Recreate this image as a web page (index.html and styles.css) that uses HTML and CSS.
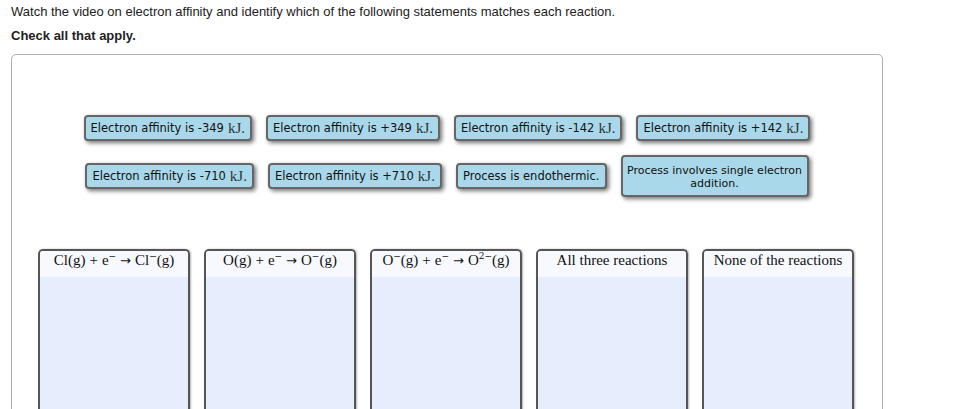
FILE: index.html
```html
<!DOCTYPE html>
<html>
<head>
<meta charset="utf-8">
<link rel="stylesheet" href="styles.css">
</head>
<body>
<p class="prompt">Watch the video on electron affinity and identify which of the following statements matches each reaction.</p>
<p class="instr">Check all that apply.</p>
<div class="box">
  <div class="chips">
    <div class="row">
      <div class="chip">Electron affinity is -349 <span class="unit">kJ.</span></div>
      <div class="chip">Electron affinity is +349 <span class="unit">kJ.</span></div>
      <div class="chip">Electron affinity is -142 <span class="unit">kJ.</span></div>
      <div class="chip">Electron affinity is +142 <span class="unit">kJ.</span></div>
    </div>
    <div class="row">
      <div class="chip">Electron affinity is -710 <span class="unit">kJ.</span></div>
      <div class="chip">Electron affinity is +710 <span class="unit">kJ.</span></div>
      <div class="chip">Process is endothermic.</div>
      <div class="chip wide">Process involves single electron addition.</div>
    </div>
  </div>
  <div class="bins">
    <div class="bin"><div class="bin-head">Cl(g)<span class="op">+</span>e<sup>−</sup><span class="arr">→</span>Cl<sup>−</sup>(g)</div><div class="bin-body"></div></div>
    <div class="bin"><div class="bin-head">O(g)<span class="op">+</span>e<sup>−</sup><span class="arr">→</span>O<sup>−</sup>(g)</div><div class="bin-body"></div></div>
    <div class="bin"><div class="bin-head">O<sup>−</sup>(g)<span class="op">+</span>e<sup>−</sup><span class="arr">→</span>O<sup>2−</sup>(g)</div><div class="bin-body"></div></div>
    <div class="bin"><div class="bin-head">All three reactions</div><div class="bin-body"></div></div>
    <div class="bin"><div class="bin-head">None of the reactions</div><div class="bin-body"></div></div>
  </div>
</div>
</body>
</html>
```
FILE: styles.css
```css
html, body {
  margin: 0;
  padding: 0;
  background: #fff;
}
body {
  padding: 0 11px;
  font-family: "Liberation Sans", Arial, sans-serif;
  font-size: 13px;
  color: #222;
  overflow: hidden;
}
.prompt {
  margin: 4px 0 0;
  line-height: 16px;
}
.instr {
  margin: 8px 0 0;
  line-height: 16px;
  font-weight: bold;
}
.box {
  margin-top: 10px;
  width: 872px;
  box-sizing: border-box;
  border: 1px solid #b0b0b0;
  border-radius: 5px;
  padding-top: 60px;
  height: 420px;
}
.chips {
  display: flex;
  flex-direction: column;
  gap: 14px;
}
.row {
  display: flex;
  justify-content: center;
  align-items: center;
  gap: 14px;
}
.chip {
  box-sizing: border-box;
  height: 26px;
  display: flex;
  align-items: center;
  justify-content: center;
  padding: 0 5px;
  background: #a8d8ea;
  border: 2px solid #666;
  border-radius: 4px;
  box-shadow: 2px 2px 4px rgba(0, 0, 0, 0.55);
  font-family: "DejaVu Sans", Verdana, sans-serif;
  font-size: 11.5px;
  color: #111;
  white-space: nowrap;
}
.chip .unit {
  font-family: "Liberation Serif", "Times New Roman", serif;
  font-size: 15px;
  margin-left: 4px;
  color: #333;
}
.chip.wide {
  height: 42px;
  width: 188px;
  padding: 2px 2px 0;
  font-size: 11px;
  white-space: normal;
  text-align: center;
  line-height: 13px;
}
.bins {
  margin-top: 52px;
  display: flex;
  justify-content: center;
  gap: 14px;
  padding-right: 2px;
}
.bin {
  width: 152px;
  box-sizing: border-box;
  border: 2px solid #555;
  border-bottom: none;
  border-radius: 5px 5px 0 0;
  box-shadow: 1px 0 2px rgba(0, 0, 0, 0.3);
  height: 200px;
  display: flex;
  flex-direction: column;
  overflow: hidden;
}
.bin-head {
  height: 26px;
  background: #f7f9ff;
  font-family: "Liberation Serif", "Times New Roman", serif;
  font-size: 15px;
  color: #111;
  text-align: center;
  line-height: 18px;
  white-space: nowrap;
}
.bin-head .op {
  margin: 0 4px;
}
.bin-head .arr {
  font-family: "DejaVu Sans", sans-serif;
  font-size: 13px;
  margin: 0 4px;
}
.bin-head sup {
  font-family: "DejaVu Serif", serif;
  font-size: 9px;
  line-height: 0;
}
.bin-body {
  flex: 1;
  background: #e6edfc;
}
```
